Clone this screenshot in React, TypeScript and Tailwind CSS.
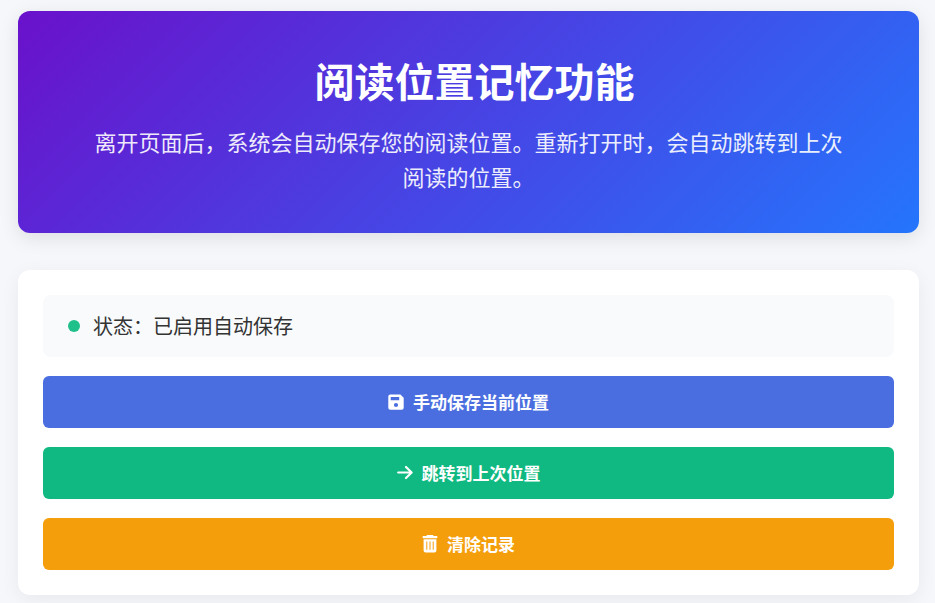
import React from 'react';

type ActionButtonProps = {
  label: string;
  color: string;
  icon: React.ReactNode;
};

const SaveIcon = () => (
  <svg viewBox="0 0 16 16" className="size-4" fill="currentColor" aria-hidden="true">
    <path
      fillRule="evenodd"
      d="M2 .5H12.4L15.7 3.8V13.7a2 2 0 0 1-2 2H2.3a2 2 0 0 1-2-2V2.5a2 2 0 0 1 2-2ZM2.7 3V6.2H11.2V3ZM8 8.9a2.1 2.1 0 1 0 0 4.2a2.1 2.1 0 0 0 0-4.2Z"
    />
  </svg>
);

const ArrowIcon = () => (
  <svg
    viewBox="0 0 16 16"
    className="size-4"
    fill="none"
    stroke="currentColor"
    strokeWidth="2.2"
    strokeLinecap="round"
    strokeLinejoin="round"
    aria-hidden="true"
  >
    <path d="M1.2 7.5H14.4M9 2L14.6 7.5L9 13" />
  </svg>
);

const TrashIcon = () => (
  <svg viewBox="0 0 16 18" className="h-[18px] w-4" fill="currentColor" aria-hidden="true">
    <path
      fillRule="evenodd"
      d="M5.2 0H10.8L11.8 1H15.3V3.3H.7V1H4.2ZM1.6 4.2H14.4V15.4a2 2 0 0 1-2 2H3.6a2 2 0 0 1-2-2ZM4.3 6.5V14.8H5.3V6.5ZM7.5 6.5V14.8H8.5V6.5ZM10.7 6.5V14.8H11.7V6.5Z"
    />
  </svg>
);

const ActionButton: React.FC<ActionButtonProps> = ({ label, color, icon }) => (
  <button
    type="button"
    className={`flex h-[52px] w-full cursor-pointer items-center justify-center gap-[9px] rounded-md text-[17px] font-bold text-white hover:opacity-90 ${color}`}
  >
    {icon}
    {label}
  </button>
);

export default function App() {
  return (
    <div className="min-h-screen bg-[#f5f7fb] pt-[11px] pr-4 pb-2 pl-[18px] font-['Noto_Sans_CJK_SC',sans-serif] text-[#333]">
      <header className="mb-[37px] rounded-xl bg-[linear-gradient(135deg,#6a11cb_0%,#2575fc_100%)] px-6 pt-[37px] pb-[39px] text-center text-white shadow-[0_5px_19px_rgba(0,0,0,0.1)]">
        <h1 className="mb-3 pl-3 text-[40px] leading-[64px] font-bold">阅读位置记忆功能</h1>
        <p className="mx-auto max-w-[750px] text-[22px] leading-[35px] opacity-90">
          离开页面后，系统会自动保存您的阅读位置。重新打开时，会自动跳转到上次阅读的位置。
        </p>
      </header>

      <main className="flex flex-col gap-[19px] rounded-xl bg-white p-[25px] shadow-[0_5px_19px_rgba(0,0,0,0.06)]">
        <div className="flex h-[62px] items-center gap-[13px] rounded-lg bg-[#f8fafc] px-[25px]">
          <span className="size-3 rounded-full bg-[#20c08a]" />
          <span className="text-xl">状态：已启用自动保存</span>
        </div>
        <ActionButton label="手动保存当前位置" color="bg-[#4a6ee0]" icon={<SaveIcon />} />
        <ActionButton label="跳转到上次位置" color="bg-[#10b981]" icon={<ArrowIcon />} />
        <ActionButton label="清除记录" color="bg-[#f59e0b]" icon={<TrashIcon />} />
      </main>
    </div>
  );
}
